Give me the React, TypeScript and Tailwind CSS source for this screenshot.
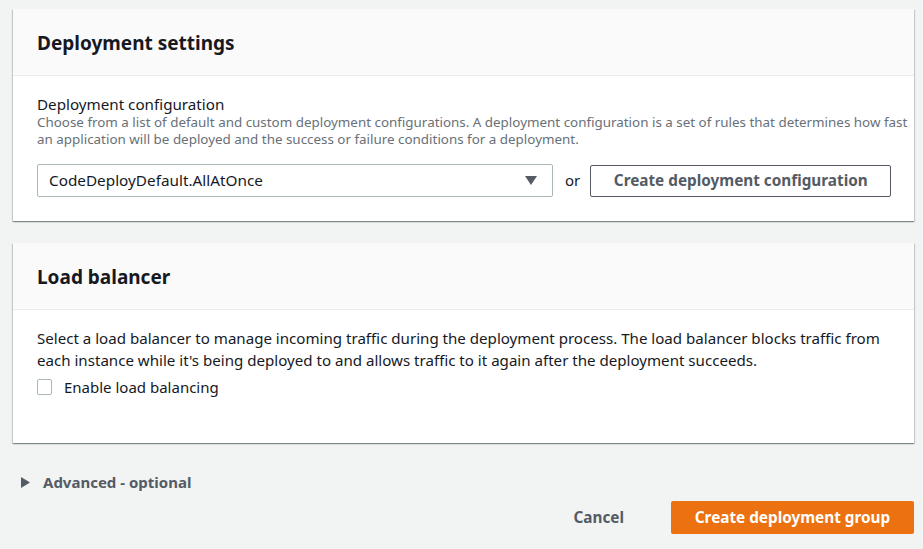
import React from "react";

const font = { fontFamily: '"Noto Sans", "Open Sans", Arial, sans-serif' };

function Card({ title, children, bodyClass }: { title: string; children: React.ReactNode; bodyClass: string }) {
  return (
    <div className="bg-white shadow-[0_1px_1px_0_rgba(0,28,36,0.3),1px_1px_1px_0_rgba(0,28,36,0.15),-1px_1px_1px_0_rgba(0,28,36,0.15)]">
      <div className="h-[67px] bg-[#fafafa] border-b border-[#eaeded] px-6 flex items-center">
        <h2 className="text-[19px] font-bold text-[#16191f] leading-[24px] mt-[2px]">{title}</h2>
      </div>
      <div className={bodyClass}>{children}</div>
    </div>
  );
}

export default function App() {
  return (
    <div style={font} className="w-[923px] h-[549px] bg-[#f2f3f3] overflow-hidden pt-[9px] pl-[13px] pr-[9px] text-[#16191f]">
      <Card title="Deployment settings" bodyClass="px-6 pt-[18px] pb-[24px]">
        <div className="text-[15.2px] leading-[20px]">Deployment configuration</div>
        <div className="text-[13.4px] leading-[17px] text-[#687078] whitespace-nowrap">
          Choose from a list of default and custom deployment configurations. A deployment configuration is a set of rules that determines how fast
          <br />
          an application will be deployed and the success or failure conditions for a deployment.
        </div>
        <div className="mt-[16px] flex items-center">
          <div className="shrink-0 w-[516px] h-[33px] border border-[#aab7b8] rounded-[2px] flex items-center justify-between pl-[11px] pr-[15px] text-[15.3px]">
            <span>CodeDeployDefault.AllAtOnce</span>
            <svg width="12" height="9" viewBox="0 0 12 9"><path d="M0 0 L12 0 L6 9 Z" fill="#545b64" /></svg>
          </div>
          <span className="ml-[12px] mr-[10px] text-[15px]">or</span>
          <button className="shrink-0 w-[301px] h-[32px] border border-[#545b64] rounded-[2px] text-[15.3px] font-bold text-[#545b64] flex items-center justify-center">
            Create deployment configuration
          </button>
        </div>
      </Card>
      <div className="h-[22px]" />
      <Card title="Load balancer" bodyClass="px-6 pt-[17px] h-[133px]">
        <p className="text-[15.1px] leading-[22px] whitespace-nowrap">
          Select a load balancer to manage incoming traffic during the deployment process. The load balancer blocks traffic from
          <br />
          each instance while it's being deployed to and allows traffic to it again after the deployment succeeds.
        </p>
        <label className="mt-[6px] flex items-center text-[15px] leading-[20px]">
          <span className="w-[15px] h-[16px] border border-[#aab7b8] rounded-[2px] bg-white mr-[12px]" />
          Enable load balancing
        </label>
      </Card>
      <div className="mt-[29px] flex items-center pl-[8px] text-[15px] font-bold text-[#545b64] leading-[20px]">
        <svg width="9" height="11" viewBox="0 0 9 11" className="mr-[13px]"><path d="M0 0 L9 5.5 L0 11 Z" fill="#545b64" /></svg>
        Advanced - optional
      </div>
      <div className="mt-[9px] flex justify-end items-center">
        <button className="text-[15.3px] font-bold text-[#545b64] mr-[47px]">Cancel</button>
        <button className="w-[243px] h-[33px] bg-[#ec7211] rounded-[2px] text-white text-[15.3px] font-bold">Create deployment group</button>
      </div>
    </div>
  );
}
